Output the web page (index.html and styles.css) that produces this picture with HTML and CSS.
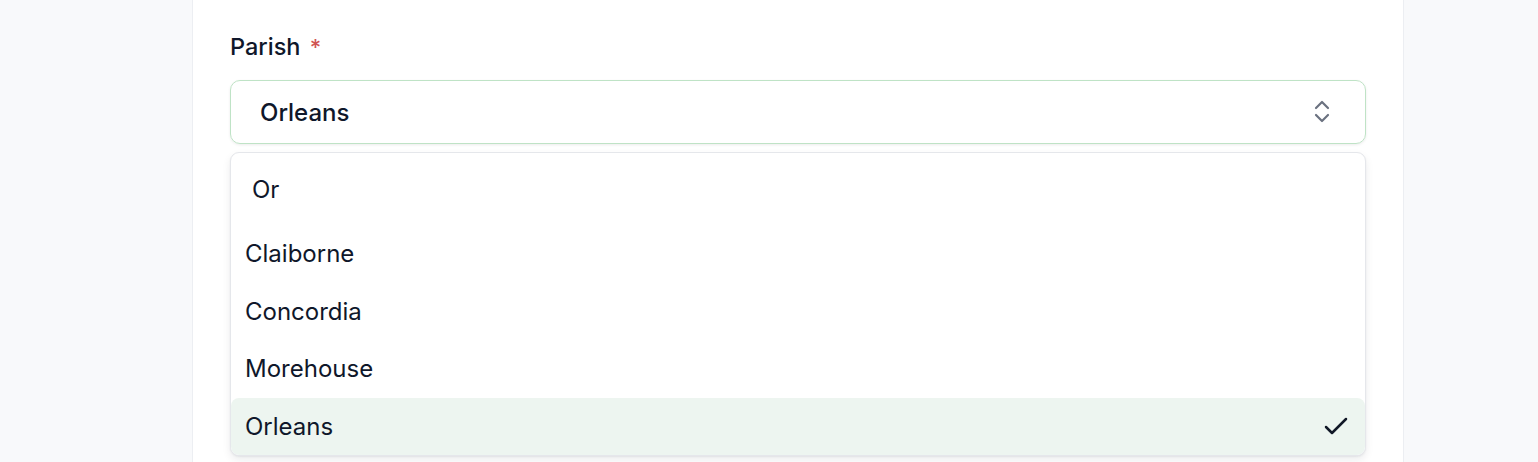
FILE: index.html
```html
<!DOCTYPE html>
<html>
<head>
<meta charset="utf-8">
<link rel="stylesheet" href="styles.css">
</head>
<body>
<div class="page">
  <div class="card">
    <label class="label">Parish <span class="req">*</span></label>
    <div class="select">
      <span class="value">Orleans</span>
      <svg class="chev" width="20" height="26" viewBox="0 0 20 26" fill="none" stroke="#6b7280" stroke-width="2.2" stroke-linecap="round" stroke-linejoin="round"><path d="M4 9 L10 3 L16 9"/><path d="M4 16 L10 22 L16 16"/></svg>
    </div>
    <div class="dropdown">
      <div class="search">Or</div>
      <div class="option">Claiborne</div>
      <div class="option">Concordia</div>
      <div class="option">Morehouse</div>
      <div class="option selected">Orleans
        <svg class="check" width="26" height="22" viewBox="0 0 26 22" fill="none" stroke="#111827" stroke-width="2.5" stroke-linecap="round" stroke-linejoin="round"><path d="M3 12 L9 18 L23 4"/></svg>
      </div>
    </div>
  </div>
</div>
</body>
</html>
```
FILE: styles.css
```css
* { box-sizing: border-box; }
html, body { margin: 0; padding: 0; }
body {
  background: #f8f9fb;
  font-family: Inter, "Noto Sans", sans-serif;
  color: #0f172a;
  height: 462px;
  overflow: hidden;
}
.page {
  padding-left: 192px;
}
.card {
  width: 1212px;
  height: 480px;
  background: #ffffff;
  border-left: 1px solid #eceef2;
  border-right: 1px solid #eceef2;
  padding: 31px 37px 0 37px;
}
.label {
  display: block;
  font-size: 23.5px;
  font-weight: 500;
  line-height: 32px;
}
.req { color: #d05454; margin-left: 3px; font-size: 22px; }
.select {
  margin-top: 17px;
  height: 64px;
  border: 1px solid #bfe3c6;
  border-radius: 10px;
  box-shadow: 0 1px 3px rgba(0,0,0,0.08);
  display: flex;
  align-items: center;
  justify-content: space-between;
  padding: 0 33px 0 29px;
}
.value {
  font-size: 24px;
  font-weight: 500;
}
.chev { display: block; }
.dropdown {
  margin-top: 8px;
  border: 1px solid #e5e7eb;
  border-radius: 9px;
  box-shadow: 0 4px 8px rgba(17,24,39,0.08), 0 1px 2px rgba(17,24,39,0.06);
  background: #fff;
  overflow: hidden;
}
.search {
  height: 72px;
  display: flex;
  align-items: center;
  padding-left: 21px;
  font-size: 24px;
}
.option {
  height: 57.5px;
  display: flex;
  align-items: center;
  justify-content: space-between;
  padding: 0 16px 0 14px;
  font-size: 24px;
}
.option.selected {
  background: #edf5f0;
  border-radius: 8px;
}
.check { display: block; }
```
